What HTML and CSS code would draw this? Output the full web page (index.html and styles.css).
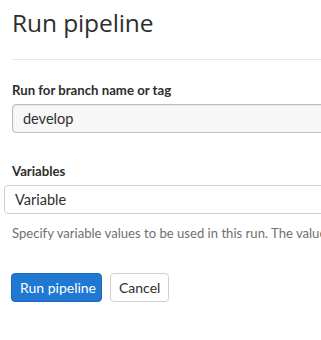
FILE: index.html
```html
<!DOCTYPE html>
<html lang="en">
<head>
    <meta charset="UTF-8">
    <meta name="viewport" content="width=device-width, initial-scale=1.0">
    <title>Run pipeline</title>
    <link rel="stylesheet" href="styles.css">
</head>
<body>
    <div class="page">
        <!-- Title -->
        <h1 class="page-title">Run pipeline</h1>

        <form class="pipeline-form">
            <!-- Branch -->
            <div class="form-group">
                <label class="form-label">Run for branch name or tag</label>
                <div class="form-control readonly">develop</div>
            </div>

            <!-- Variables -->
            <div class="form-group variables">
                <label class="form-label">Variables</label>
                <div class="form-control variable-row">Variable</div>
                <p class="help-text">Specify variable values to be used in this run. The values specified in CI/CD settings will be used by default.</p>
            </div>

            <!-- Actions -->
            <div class="form-actions">
                <button type="button" class="btn btn-primary">Run pipeline</button>
                <button type="button" class="btn btn-default">Cancel</button>
            </div>
        </form>
    </div>
</body>
</html>
```

FILE: styles.css
```css
html, body {
    margin: 0;
    padding: 0;
    background: #fff;
    overflow: hidden;
}

body {
    font-family: 'Lato', 'Open Sans', sans-serif;
    color: #2e2e2e;
    font-size: 14px;
}

.page {
    padding: 0 0 0 12px;
    width: 309px;
    overflow: hidden;
}

/* Title */
.page-title {
    margin: 0;
    padding-top: 6px;
    height: 53px;
    font-family: 'Open Sans', sans-serif;
    font-size: 24.5px;
    font-weight: 400;
    line-height: 34px;
    color: #2e2e2e;
    border-bottom: 1px solid #e8e8e8;
    letter-spacing: -0.1px;
}

.pipeline-form {
    padding-top: 20px;
    width: 500px;
}

.form-group {
    margin-bottom: 28px;
}

.form-label {
    display: block;
    font-weight: 700;
    font-size: 13.2px;
    line-height: 20px;
    margin-bottom: 4px;
}

.form-control {
    box-sizing: border-box;
    height: 29px;
    padding: 0 10px;
    line-height: 27px;
    font-size: 14.5px;
    border: 1px solid #cfcfcf;
    border-radius: 4px;
    background: #fff;
}

.form-control.readonly {
    background: #f7f7f7;
    border-color: #bdbdbd;
    box-shadow: inset 0 1px 2px rgba(0, 0, 0, 0.08);
}

.variables {
    margin-bottom: 30px;
}

.variable-row {
    margin-left: -8px;
    padding-left: 10px;
}

.help-text {
    margin: 9px 0 0;
    font-size: 13.1px;
    line-height: 20px;
    color: #707070;
    white-space: nowrap;
}

/* Buttons */
.form-actions {
    display: flex;
    gap: 8px;
    margin-left: -1px;
}

.btn {
    box-sizing: border-box;
    height: 29px;
    padding: 0 8px;
    font-family: inherit;
    font-size: 14px;
    border-radius: 4px;
    cursor: pointer;
    white-space: nowrap;
}

.btn-primary {
    background: #1f78d1;
    border: 1px solid #1b69b6;
    color: #fff;
    width: 91px;
}

.btn-default {
    background: #fff;
    border: 1px solid #d0d0d0;
    color: #2e2e2e;
    width: 59px;
}
```
